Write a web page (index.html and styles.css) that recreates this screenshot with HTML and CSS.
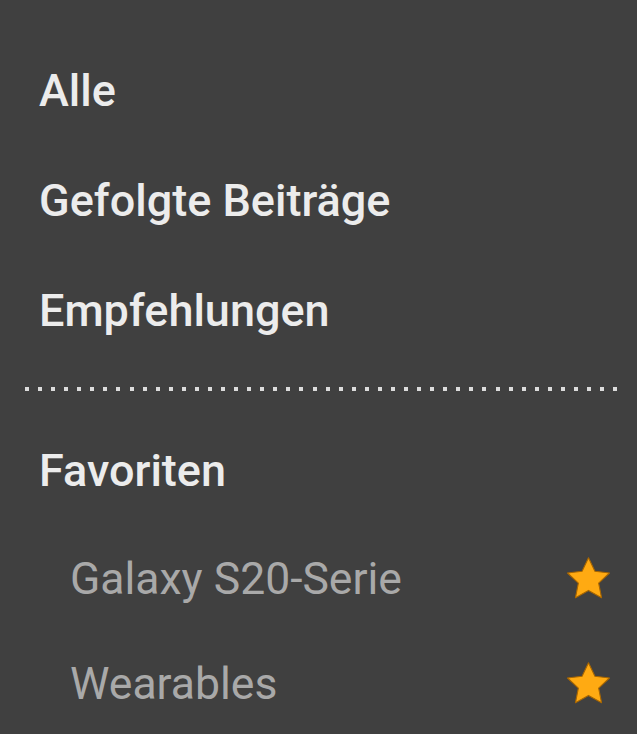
FILE: index.html
```html
<!DOCTYPE html>
<html lang="de">
<head>
<meta charset="utf-8">
<title>Community</title>
<link rel="stylesheet" href="styles.css">
</head>
<body>
<nav class="drawer">
  <ul class="menu">
    <li class="menu-item">Alle</li>
    <li class="menu-item">Gefolgte Beiträge</li>
    <li class="menu-item">Empfehlungen</li>
  </ul>
  <div class="divider"></div>
  <div class="section-title">Favoriten</div>
  <ul class="favorites">
    <li class="fav-item">
      <span class="fav-label">Galaxy S20-Serie</span>
      <svg class="star" viewBox="0 0 24 24" aria-hidden="true"><path d="M12 2.6l2.9 6.1 6.6.8-4.9 4.6 1.3 6.6L12 17.4l-5.9 3.3 1.3-6.6-4.9-4.6 6.6-.8z"/></svg>
    </li>
    <li class="fav-item">
      <span class="fav-label">Wearables</span>
      <svg class="star" viewBox="0 0 24 24" aria-hidden="true"><path d="M12 2.6l2.9 6.1 6.6.8-4.9 4.6 1.3 6.6L12 17.4l-5.9 3.3 1.3-6.6-4.9-4.6 6.6-.8z"/></svg>
    </li>
  </ul>
</nav>
</body>
</html>
```
FILE: styles.css
```css
html, body {
  margin: 0;
  padding: 0;
  background: #404040;
}

body {
  font-family: Roboto, "Noto Sans", sans-serif;
  width: 637px;
  height: 734px;
  overflow: hidden;
}

.drawer {
  padding-top: 36px;
}

.menu, .favorites {
  list-style: none;
  margin: 0;
  padding: 0;
}

.menu-item {
  height: 110px;
  line-height: 110px;
  padding-left: 39px;
  font-size: 45px;
  font-weight: 500;
  color: #ececec;
}

/* dotted separator: 4px squares every ~13px */
.divider {
  margin: 21px 20px 0 25px;
  height: 4px;
  background: repeating-linear-gradient(to right, #dcdcdc 0 4px, transparent 4px 13.07px);
}

.section-title {
  height: 110px;
  line-height: 110px;
  margin-top: 25px;
  padding-left: 39px;
  font-size: 45px;
  font-weight: 500;
  color: #ececec;
}

.fav-item {
  display: flex;
  align-items: center;
  justify-content: space-between;
  height: 105px;
  padding-left: 70px;
  padding-right: 22px;
}

.fav-label {
  font-size: 44.5px;
  color: #a9a9a9;
}

.star {
  width: 53px;
  height: 53px;
  fill: #ffaa12;
  stroke: #a86600;
  stroke-width: 0.5;
  stroke-linejoin: round;
}
```
